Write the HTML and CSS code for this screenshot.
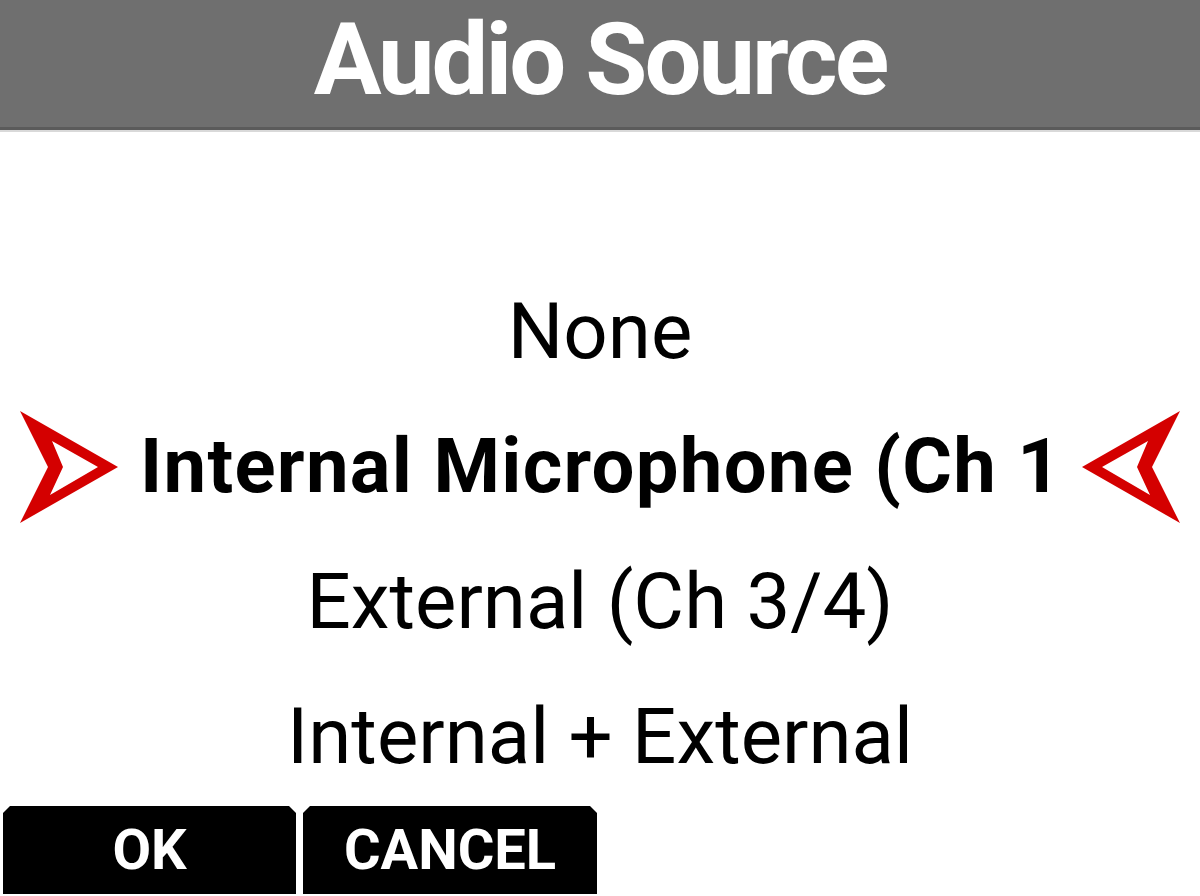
FILE: index.html
```html
<!DOCTYPE html>
<html lang="en">
<head>
  <meta charset="UTF-8" />
  <title>Audio Source</title>
  <link rel="stylesheet" href="styles.css">
</head>
<body>

  <div class="screen">
    <div class="title-bar">
      <h1>Audio Source</h1>
    </div>

    <ul class="options">
      <li>None</li>
      <li class="selected">
        <svg class="pointer" viewBox="0 0 120 130">
          <path fill-rule="evenodd" d="M20 9 L118 65 L20 121 L48 65 Z M52 39 L63 65 L50 93 L98 65 Z"/>
        </svg>
        <span class="label">Internal Microphone (Ch 1</span>
        <svg class="pointer flip" viewBox="0 0 120 130">
          <path fill-rule="evenodd" d="M20 9 L118 65 L20 121 L48 65 Z M52 39 L63 65 L50 93 L98 65 Z"/>
        </svg>
      </li>
      <li>External (Ch 3/4)</li>
      <li>Internal + External</li>
    </ul>

    <div class="soft-keys">
      <button class="key key-ok">OK</button>
      <button class="key key-cancel">CANCEL</button>
    </div>
  </div>

</body>
</html>
```

FILE: styles.css
```css
body {
  margin: 0;
  background: #fff;
  font-family: Roboto, 'Liberation Sans', sans-serif;
  color: #000;
}

.screen {
  width: 1200px;
  height: 896px;
  overflow: hidden;
}

.title-bar {
  height: 127px;
  background: #6f6f6f;
  border-bottom: 3px solid #5b5b5b;
  box-shadow: 0 2px 0 #d9d9d9;
  text-align: center;
}

.title-bar h1 {
  margin: 0;
  font-size: 101px;
  font-weight: 700;
  line-height: 120px;
  letter-spacing: -3px;
  color: #fff;
}

.options {
  list-style: none;
  margin: 0;
  padding: 134px 0 0;
}

.options li {
  height: 135px;
  font-size: 78px;
  line-height: 135px;
  text-align: center;
  white-space: nowrap;
}

.options li.selected {
  display: grid;
  grid-template-columns: 120px 1fr 120px;
  align-items: center;
  text-align: left;
  font-size: 76px;
  font-weight: 700;
  letter-spacing: 1.3px;
}

.pointer {
  width: 120px;
  height: 130px;
  fill: #d40000;
}

.pointer.flip {
  transform: scaleX(-1);
}

.label {
  padding-left: 20px;
}

.soft-keys {
  display: flex;
  gap: 7px;
  margin-top: 2px;
  padding-left: 3px;
}

.key {
  height: 88px;
  border: none;
  padding: 0;
  background: #000;
  color: #fff;
  font-family: Roboto, 'Liberation Sans', sans-serif;
  font-size: 56px;
  font-weight: 700;
  clip-path: polygon(7px 0, calc(100% - 7px) 0, 100% 7px, 100% 100%, 0 100%, 0 7px);
}

.key-ok {
  width: 293px;
}

.key-cancel {
  width: 294px;
}
```
